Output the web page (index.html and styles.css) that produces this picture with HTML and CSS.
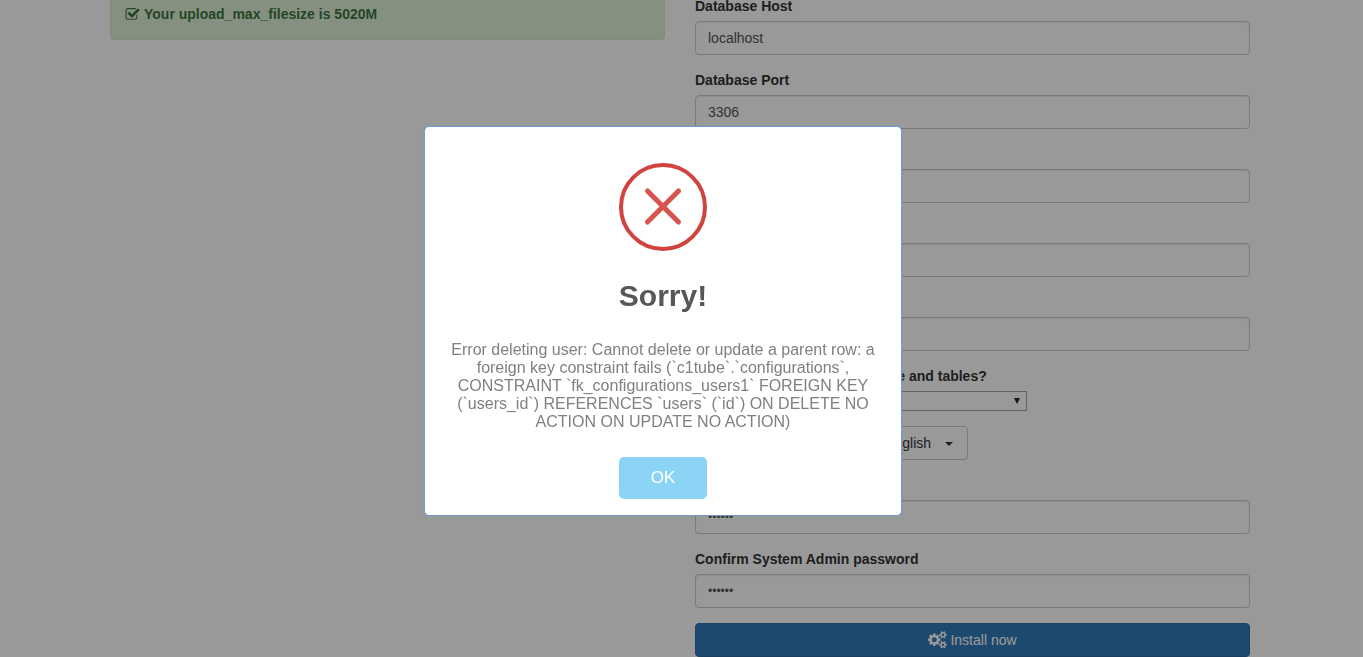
FILE: index.html
```html
<!DOCTYPE html>
<html lang="en">
<head>
<meta charset="UTF-8" />
<meta name="viewport" content="width=device-width, initial-scale=1" />
<title>Install</title>
<link rel="stylesheet" href="styles.css">
</head>
<body>
  <div class="page">
    <div class="col">
      <div class="alert-success">
        <svg class="icon-check" viewBox="0 0 1792 1792" aria-hidden="true"><path fill="currentColor" d="M1472 930v318q0 119-84.5 203.5t-203.5 84.5h-832q-119 0-203.5-84.5t-84.5-203.5v-832q0-119 84.5-203.5t203.5-84.5h832q63 0 117 25 15 7 18 23 3 17-9 29l-49 49q-10 10-23 10-3 0-9-2-23-6-45-6h-832q-66 0-113 47t-47 113v832q0 66 47 113t113 47h832q66 0 113-47t47-113v-254q0-13 9-22l64-64q10-10 23-10 6 0 12 3 20 8 20 29zm231-489l-814 814q-24 24-57 24t-57-24l-430-430q-24-24-24-57t24-57l110-110q24-24 57-24t57 24l263 263 647-647q24-24 57-24t57 24l110 110q24 24 24 57t-24 57z"/></svg>
        <span>Your upload_max_filesize is 5020M</span>
      </div>
    </div>

    <form class="col install-form">
      <div class="form-group">
        <label>Database Host</label>
        <input class="form-control" type="text" value="localhost">
      </div>
      <div class="form-group">
        <label>Database Port</label>
        <input class="form-control" type="text" value="3306">
      </div>
      <div class="form-group">
        <label>Database Name</label>
        <input class="form-control" type="text" value="c1tube">
      </div>
      <div class="form-group">
        <label>Database Username</label>
        <input class="form-control" type="text" value="root">
      </div>
      <div class="form-group">
        <label>Database Password</label>
        <input class="form-control form-password" type="password" value="">
      </div>
      <div class="form-group-small">
        <label>Do you want to create database and tables?</label>
        <div class="select-wrap">
          <select class="plain-select">
            <option>Yes</option>
          </select>
        </div>
      </div>
      <div class="language-row">
        <span class="language-label">Language</span>
        <button type="button" class="btn-language">English <span class="caret"></span></button>
      </div>
      <div class="form-group">
        <label>System Admin password</label>
        <input class="form-control form-password" type="password" value="123456">
      </div>
      <div class="form-group">
        <label>Confirm System Admin password</label>
        <input class="form-control form-password" type="password" value="123456">
      </div>
      <button type="button" class="btn-install">
        <svg class="icon-cogs" viewBox="0 0 2048 1792" aria-hidden="true"><path fill="currentColor" d="M896 896q0-106-75-181t-181-75-181 75-75 181 75 181 181 75 181-75 75-181zm768 512q0-52-38-90t-90-38-90 38-38 90q0 53 37.5 90.5t90.5 37.5 90.5-37.5 37.5-90.5zm0-1024q0-52-38-90t-90-38-90 38-38 90q0 53 37.5 90.5t90.5 37.5 90.5-37.5 37.5-90.5zm-384 421v185q0 10-7 19.5t-16 10.5l-155 24q-11 35-32 76 34 48 90 115 7 11 7 20 0 12-7 19-23 30-82.5 89.5t-78.5 59.5q-11 0-21-7l-115-90q-37 19-77 31-11 108-23 155-7 24-30 24h-186q-11 0-20-7.5t-10-17.5l-23-153q-34-10-75-31l-118 89q-7 7-20 7-11 0-21-8-144-133-144-160 0-9 7-19 10-14 41-53t47-61q-23-44-35-82l-152-24q-10-1-17-9.5t-7-19.5v-185q0-10 7-19.5t16-10.5l155-24q11-35 32-76-34-48-90-115-7-11-7-20 0-12 7-20 22-30 82-89t79-59q11 0 21 7l115 90q34-18 77-32 11-108 23-154 7-24 30-24h186q11 0 20 7.5t10 17.5l23 153q34 10 75 31l118-89q8-7 20-7 11 0 21 8 144 133 144 160 0 8-7 19-12 16-42 54t-45 60q23 48 34 82l152 23q10 2 17 10.5t7 19.5zm640 533v140q0 16-149 31-12 27-30 52 51 113 51 138 0 4-4 7-122 71-124 71-8 0-46-47t-52-68q-20 2-30 2t-30-2q-14 21-52 68t-46 47q-2 0-124-71-4-3-4-7 0-25 51-138-18-25-30-52-149-15-149-31v-140q0-16 149-31 13-29 30-52-51-113-51-138 0-4 4-7 4-2 35-20t59-34 30-16q8 0 46 46.5t52 67.5q20-2 30-2t30 2q51-71 92-112l6-2q4 0 124 70 4 3 4 7 0 25-51 138 17 23 30 52 149 15 149 31zm0-1024v140q0 16-149 31-12 27-30 52 51 113 51 138 0 4-4 7-122 71-124 71-8 0-46-47t-52-68q-20 2-30 2t-30-2q-14 21-52 68t-46 47q-2 0-124-71-4-3-4-7 0-25 51-138-18-25-30-52-149-15-149-31v-140q0-16 149-31 13-29 30-52-51-113-51-138 0-4 4-7 4-2 35-20t59-34 30-16q8 0 46 46.5t52 67.5q20-2 30-2t30 2q51-71 92-112l6-2q4 0 124 70 4 3 4 7 0 25-51 138 17 23 30 52 149 15 149 31z"/></svg>
        Install now
      </button>
    </form>
  </div>

  <div class="overlay"></div>

  <div class="sweet-alert" role="alertdialog" aria-label="Sorry!">
    <svg class="icon-error" viewBox="0 0 88 88" aria-hidden="true">
      <circle cx="44" cy="44" r="42" fill="none" stroke="#d0433e" stroke-width="4"/>
      <path d="M28.5 28 L59.5 59 M59.5 28 L28.5 59" stroke="#d9534f" stroke-width="5" stroke-linecap="round"/>
    </svg>
    <h2>Sorry!</h2>
    <p>Error deleting user: Cannot delete or update a parent row: a foreign key constraint fails (`c1tube`.`configurations`, CONSTRAINT `fk_configurations_users1` FOREIGN KEY (`users_id`) REFERENCES `users` (`id`) ON DELETE NO ACTION ON UPDATE NO ACTION)</p>
    <button type="button" class="btn-confirm">OK</button>
  </div>
</body>
</html>
```

FILE: styles.css
```css
* {
  box-sizing: border-box;
}

html, body {
  height: 100%;
}

body {
  margin: 0;
  overflow: hidden;
  background: #fff;
  color: #333;
  font-family: "Liberation Sans", Arial, sans-serif;
  font-size: 14px;
  line-height: 20px;
}

/* page is scrolled, so the first row starts above the fold */
.page {
  display: flex;
  gap: 30px;
  width: 1140px;
  margin: -4px 0 0 110px;
}

.col {
  width: 555px;
  flex: none;
}

.alert-success {
  display: flex;
  align-items: center;
  gap: 4px;
  height: 44px;
  margin-top: 0;
  padding: 0 14px 7px;
  background: #dff0d8;
  border: 1px solid #d6e9c6;
  border-top: 0;
  border-radius: 0 0 4px 4px;
  color: #3c763d;
  font-weight: bold;
}

.icon-check {
  width: 15px;
  height: 15px;
}

label {
  display: block;
  margin-bottom: 5px;
  font-weight: bold;
}

.form-group {
  margin-bottom: 15px;
}

.form-control {
  display: block;
  width: 100%;
  height: 34px;
  padding: 6px 12px;
  background: #fff;
  border: 1px solid #ccc;
  border-radius: 4px;
  box-shadow: inset 0 1px 1px rgba(0,0,0,.075);
  color: #555;
  font-family: inherit;
  font-size: 14px;
}

.form-password {
  font-size: 12px;
}

.select-wrap {
  position: relative;
  width: 332px;
  height: 20px;
}

.select-wrap::after {
  content: "";
  position: absolute;
  right: 7px;
  top: 7px;
  border-top: 6px solid #222;
  border-left: 3px solid transparent;
  border-right: 3px solid transparent;
}

.plain-select {
  display: block;
  width: 100%;
  height: 20px;
  padding: 0 4px;
  appearance: none;
  background: #fff;
  border: 1px solid #a6a6a6;
  color: #333;
  font-family: inherit;
  font-size: 13px;
}

.language-row {
  display: flex;
  align-items: center;
  gap: 12px;
  height: 34px;
  margin: 15px 0 15px;
}

.language-label {
  font-weight: bold;
}

.btn-language {
  height: 34px;
  margin-left: 99px;
  padding: 6px 14px 6px 12px;
  background: #fff;
  border: 1px solid #ccc;
  border-radius: 4px;
  color: #333;
  font-family: inherit;
  font-size: 14px;
  white-space: nowrap;
}

.caret {
  display: inline-block;
  margin-left: 10px;
  vertical-align: middle;
  border-top: 4px solid #333;
  border-left: 4px solid transparent;
  border-right: 4px solid transparent;
}

.btn-install {
  display: flex;
  justify-content: center;
  align-items: center;
  gap: 2px;
  width: 100%;
  height: 34px;
  background: #337ab7;
  border: 1px solid #2e6da4;
  border-radius: 4px;
  color: #fff;
  font-family: inherit;
  font-size: 14px;
}

.icon-cogs {
  width: 20px;
  height: 17.5px;
}

.overlay {
  position: fixed;
  inset: 0;
  background: rgba(0,0,0,.4);
}

.sweet-alert {
  position: fixed;
  left: 424px;
  top: 126px;
  width: 478px;
  height: 390px;
  display: flex;
  flex-direction: column;
  align-items: center;
  padding: 36px 16px 0;
  background: #fff;
  border: 1px solid #7398d8;
  border-radius: 5px;
  box-shadow: 0 0 1px rgba(90,130,210,.7);
  text-align: center;
}

.icon-error {
  width: 88px;
  height: 88px;
  flex: none;
}

.sweet-alert h2 {
  margin: 25px 0 0;
  color: #575757;
  font-size: 30px;
  line-height: 40px;
  font-weight: 600;
}

.sweet-alert p {
  margin: 25px 0 0;
  color: #808080;
  font-size: 16px;
  line-height: 18px;
}

.btn-confirm {
  width: 88px;
  height: 42px;
  margin-top: 26px;
  flex: none;
  background: #8cd4f5;
  border: 0;
  border-radius: 5px;
  color: #fff;
  font-family: inherit;
  font-size: 17px;
}
```
